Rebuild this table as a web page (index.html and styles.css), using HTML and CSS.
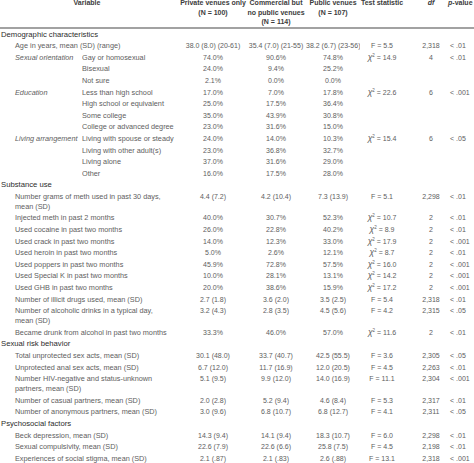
FILE: index.html
```html
<!DOCTYPE html>
<html>
<head>
<meta charset="utf-8">
<link rel="stylesheet" href="styles.css">
</head>
<body>
<table class="tbl">
<colgroup>
<col class="c-sub"><col class="c-lab"><col class="c-priv"><col class="c-comm"><col class="c-pub"><col class="c-test"><col class="c-df"><col class="c-p">
</colgroup>
<thead>
<tr>
<th colspan="2" class="h-var">Variable</th>
<th>Private venues only<br>(N = 100)</th>
<th>Commercial but<br>no public venues<br>(N = 114)</th>
<th>Public venues<br>(N = 107)</th>
<th>Test statistic</th>
<th class="h-df"><i>df</i></th>
<th class="h-p"><i>p</i>-value</th>
</tr>
</thead>
<tbody>
<tr><td colspan="8" class="sec">Demographic characteristics</td></tr>
<tr><td colspan="2" class="lab1">Age in years, mean (SD) (range)</td><td class="v">38.0 (8.0) (20-61)</td><td class="v">35.4 (7.0) (21-55)</td><td class="v">38.2 (6.7) (23-56)</td><td class="t">F = 5.5</td><td class="d">2,318</td><td class="p">&lt; .01</td></tr>
<tr><td class="sub">Sexual orientation</td><td class="lab">Gay or homosexual</td><td class="v">74.0%</td><td class="v">90.6%</td><td class="v">74.8%</td><td class="t"><span class="chi">χ</span><sup>2</sup> = 14.9</td><td class="d">4</td><td class="p">&lt; .01</td></tr>
<tr><td class="sub"></td><td class="lab">Bisexual</td><td class="v">24.0%</td><td class="v">9.4%</td><td class="v">25.2%</td><td class="t"></td><td class="d"></td><td class="p"></td></tr>
<tr><td class="sub"></td><td class="lab">Not sure</td><td class="v">2.1%</td><td class="v">0.0%</td><td class="v">0.0%</td><td class="t"></td><td class="d"></td><td class="p"></td></tr>
<tr><td class="sub">Education</td><td class="lab">Less than high school</td><td class="v">17.0%</td><td class="v">7.0%</td><td class="v">17.8%</td><td class="t"><span class="chi">χ</span><sup>2</sup> = 22.6</td><td class="d">6</td><td class="p">&lt; .001</td></tr>
<tr><td class="sub"></td><td class="lab">High school or equivalent</td><td class="v">25.0%</td><td class="v">17.5%</td><td class="v">36.4%</td><td class="t"></td><td class="d"></td><td class="p"></td></tr>
<tr><td class="sub"></td><td class="lab">Some college</td><td class="v">35.0%</td><td class="v">43.9%</td><td class="v">30.8%</td><td class="t"></td><td class="d"></td><td class="p"></td></tr>
<tr><td class="sub"></td><td class="lab">College or advanced degree</td><td class="v">23.0%</td><td class="v">31.6%</td><td class="v">15.0%</td><td class="t"></td><td class="d"></td><td class="p"></td></tr>
<tr><td class="sub">Living arrangement</td><td class="lab">Living with spouse or steady</td><td class="v">24.0%</td><td class="v">14.0%</td><td class="v">10.3%</td><td class="t"><span class="chi">χ</span><sup>2</sup> = 15.4</td><td class="d">6</td><td class="p">&lt; .05</td></tr>
<tr><td class="sub"></td><td class="lab">Living with other adult(s)</td><td class="v">23.0%</td><td class="v">36.8%</td><td class="v">32.7%</td><td class="t"></td><td class="d"></td><td class="p"></td></tr>
<tr><td class="sub"></td><td class="lab">Living alone</td><td class="v">37.0%</td><td class="v">31.6%</td><td class="v">29.0%</td><td class="t"></td><td class="d"></td><td class="p"></td></tr>
<tr><td class="sub"></td><td class="lab">Other</td><td class="v">16.0%</td><td class="v">17.5%</td><td class="v">28.0%</td><td class="t"></td><td class="d"></td><td class="p"></td></tr>
<tr><td colspan="8" class="sec">Substance use</td></tr>
<tr><td colspan="2" class="lab1">Number grams of meth used in past 30 days,<br>mean (SD)</td><td class="v">4.4 (7.2)</td><td class="v">4.2 (10.4)</td><td class="v">7.3 (13.9)</td><td class="t">F = 5.1</td><td class="d">2,298</td><td class="p">&lt; .01</td></tr>
<tr><td colspan="2" class="lab1">Injected meth in past 2 months</td><td class="v">40.0%</td><td class="v">30.7%</td><td class="v">52.3%</td><td class="t"><span class="chi">χ</span><sup>2</sup> = 10.7</td><td class="d">2</td><td class="p">&lt; .01</td></tr>
<tr><td colspan="2" class="lab1">Used cocaine in past two months</td><td class="v">26.0%</td><td class="v">22.8%</td><td class="v">40.2%</td><td class="t"><span class="chi">χ</span><sup>2</sup> = 8.9</td><td class="d">2</td><td class="p">&lt; .01</td></tr>
<tr><td colspan="2" class="lab1">Used crack in past two months</td><td class="v">14.0%</td><td class="v">12.3%</td><td class="v">33.0%</td><td class="t"><span class="chi">χ</span><sup>2</sup> = 17.9</td><td class="d">2</td><td class="p">&lt; .001</td></tr>
<tr><td colspan="2" class="lab1">Used heroin in past two months</td><td class="v">5.0%</td><td class="v">2.6%</td><td class="v">12.1%</td><td class="t"><span class="chi">χ</span><sup>2</sup> = 8.7</td><td class="d">2</td><td class="p">&lt; .01</td></tr>
<tr><td colspan="2" class="lab1">Used poppers in past two months</td><td class="v">45.9%</td><td class="v">72.8%</td><td class="v">57.5%</td><td class="t"><span class="chi">χ</span><sup>2</sup> = 16.0</td><td class="d">2</td><td class="p">&lt; .001</td></tr>
<tr><td colspan="2" class="lab1">Used Special K in past two months</td><td class="v">10.0%</td><td class="v">28.1%</td><td class="v">13.1%</td><td class="t"><span class="chi">χ</span><sup>2</sup> = 14.2</td><td class="d">2</td><td class="p">&lt; .001</td></tr>
<tr><td colspan="2" class="lab1">Used GHB in past two months</td><td class="v">20.0%</td><td class="v">38.6%</td><td class="v">15.9%</td><td class="t"><span class="chi">χ</span><sup>2</sup> = 17.2</td><td class="d">2</td><td class="p">&lt; .001</td></tr>
<tr><td colspan="2" class="lab1">Number of illicit drugs used, mean (SD)</td><td class="v">2.7 (1.8)</td><td class="v">3.6 (2.0)</td><td class="v">3.5 (2.5)</td><td class="t">F = 5.4</td><td class="d">2,318</td><td class="p">&lt; .01</td></tr>
<tr><td colspan="2" class="lab1">Number of alcoholic drinks in a typical day,<br>mean (SD)</td><td class="v">3.2 (4.3)</td><td class="v">2.8 (3.5)</td><td class="v">4.5 (5.6)</td><td class="t">F = 4.2</td><td class="d">2,315</td><td class="p">&lt; .05</td></tr>
<tr><td colspan="2" class="lab1">Became drunk from alcohol in past two months</td><td class="v">33.3%</td><td class="v">46.0%</td><td class="v">57.0%</td><td class="t"><span class="chi">χ</span><sup>2</sup> = 11.6</td><td class="d">2</td><td class="p">&lt; .01</td></tr>
<tr><td colspan="8" class="sec">Sexual risk behavior</td></tr>
<tr><td colspan="2" class="lab1">Total unprotected sex acts, mean (SD)</td><td class="v">30.1 (48.0)</td><td class="v">33.7 (40.7)</td><td class="v">42.5 (55.5)</td><td class="t">F = 3.6</td><td class="d">2,305</td><td class="p">&lt; .05</td></tr>
<tr><td colspan="2" class="lab1">Unprotected anal sex acts, mean (SD)</td><td class="v">6.7 (12.0)</td><td class="v">11.7 (16.9)</td><td class="v">12.0 (20.5)</td><td class="t">F = 4.5</td><td class="d">2,263</td><td class="p">&lt; .01</td></tr>
<tr><td colspan="2" class="lab1">Number HIV-negative and status-unknown<br>partners, mean (SD)</td><td class="v">5.1 (9.5)</td><td class="v">9.9 (12.0)</td><td class="v">14.0 (16.9)</td><td class="t">F = 11.1</td><td class="d">2,304</td><td class="p">&lt; .001</td></tr>
<tr><td colspan="2" class="lab1">Number of casual partners, mean (SD)</td><td class="v">2.0 (2.8)</td><td class="v">5.2 (9.4)</td><td class="v">4.6 (8.4)</td><td class="t">F = 5.3</td><td class="d">2,317</td><td class="p">&lt; .01</td></tr>
<tr><td colspan="2" class="lab1">Number of anonymous partners, mean (SD)</td><td class="v">3.0 (9.6)</td><td class="v">6.8 (10.7)</td><td class="v">6.8 (12.7)</td><td class="t">F = 4.1</td><td class="d">2,311</td><td class="p">&lt; .05</td></tr>
<tr><td colspan="8" class="sec">Psychosocial factors</td></tr>
<tr><td colspan="2" class="lab1">Beck depression, mean (SD)</td><td class="v">14.3 (9.4)</td><td class="v">14.1 (9.4)</td><td class="v">18.3 (10.7)</td><td class="t">F = 6.0</td><td class="d">2,298</td><td class="p">&lt; .01</td></tr>
<tr><td colspan="2" class="lab1">Sexual compulsivity, mean (SD)</td><td class="v">22.6 (7.9)</td><td class="v">22.6 (6.6)</td><td class="v">25.8 (7.5)</td><td class="t">F = 4.5</td><td class="d">2,198</td><td class="p">&lt; .01</td></tr>
<tr><td colspan="2" class="lab1">Experiences of social stigma, mean (SD)</td><td class="v">2.1 (.87)</td><td class="v">2.1 (.83)</td><td class="v">2.6 (.88)</td><td class="t">F = 13.1</td><td class="d">2,318</td><td class="p">&lt; .001</td></tr>
</tbody>
</table>
</body>
</html>
```

FILE: styles.css
```css
html, body {
  margin: 0;
  padding: 0;
  background: #ffffff;
}
body {
  width: 474px;
  height: 463px;
  overflow: hidden;
  font-family: "Liberation Sans", Arial, sans-serif;
  font-size: 7px;
  color: #5e5e5e;
}
.tbl {
  border-collapse: collapse;
  table-layout: fixed;
  width: 474px;
  margin-top: -2px;
}
.c-sub { width: 82px; }
.c-lab { width: 98px; }
.c-priv { width: 66px; }
.c-comm { width: 60px; }
.c-pub { width: 54px; }
.c-test { width: 44px; }
.c-df { width: 44px; }
.c-p { width: 26px; }

.tbl th {
  font-weight: bold;
  color: #3c3c3c;
  text-align: center;
  vertical-align: top;
  white-space: nowrap;
  line-height: 9.6px;
  padding: 0;
  border-bottom: 2px solid #a2a2a2;
}
.tbl th.h-var { padding-right: 6px; }
.tbl th.h-df { padding-left: 10px; }
.tbl th.h-p { text-align: left; padding-left: 0; }

.tbl td {
  white-space: nowrap;
  line-height: 10px;
  height: 10px;
  padding: 0.8px 0;
  vertical-align: top;
  overflow: hidden;
}
.sec {
  color: #2c2c2c;
  font-size: 7.7px;
  padding-left: 1px !important;
}
.lab1 {
  font-size: 7.3px;
  padding-left: 15px !important;
}
.sub {
  font-size: 7.3px;
  padding-left: 15px !important;
  font-style: italic;
}
.lab {
  font-size: 7.3px;
  padding-left: 0;
}
.v { text-align: center; }
.t { text-align: center; }
.d { text-align: center; padding-left: 10px !important; }
.p { text-align: left; padding-left: 2px !important; }
.chi {
  font-size: 8.5px;
  font-style: italic;
  line-height: 0;
}
.t sup {
  font-size: 4.5px;
  line-height: 0;
  vertical-align: 3.5px;
}
```
